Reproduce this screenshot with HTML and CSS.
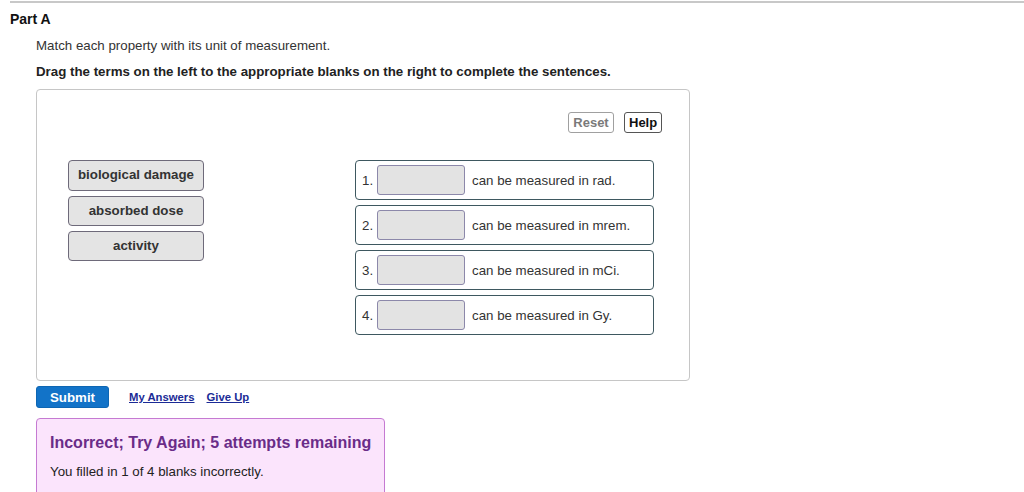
FILE: index.html
```html
<!DOCTYPE html>
<html>
<head>
<meta charset="utf-8">
<link rel="stylesheet" href="styles.css">
</head>
<body>
<div class="topline"></div>
<h2 class="part">Part A</h2>
<div class="content">
  <p class="prompt">Match each property with its unit of measurement.</p>
  <p class="instr">Drag the terms on the left to the appropriate blanks on the right to complete the sentences.</p>
  <div class="box">
    <div class="tools">
      <button class="btn reset">Reset</button>
      <button class="btn help">Help</button>
    </div>
    <div class="work">
      <div class="terms">
        <div class="term">biological damage</div>
        <div class="term">absorbed dose</div>
        <div class="term">activity</div>
      </div>
      <div class="sentences">
        <div class="sent"><span class="num">1.</span><span class="blank"></span><span class="stext">can be measured in rad.</span></div>
        <div class="sent"><span class="num">2.</span><span class="blank"></span><span class="stext">can be measured in mrem.</span></div>
        <div class="sent"><span class="num">3.</span><span class="blank"></span><span class="stext">can be measured in mCi.</span></div>
        <div class="sent"><span class="num">4.</span><span class="blank"></span><span class="stext">can be measured in Gy.</span></div>
      </div>
    </div>
  </div>
  <div class="actions">
    <button class="submit">Submit</button>
    <a class="link" href="#">My Answers</a>
    <a class="link" href="#">Give Up</a>
  </div>
  <div class="feedback">
    <div class="fb-title">Incorrect; Try Again; 5 attempts remaining</div>
    <div class="fb-body">You filled in 1 of 4 blanks incorrectly.</div>
  </div>
</div>
</body>
</html>
```
FILE: styles.css
```css
html, body {
  margin: 0;
  padding: 0;
  background: #fff;
  font-family: "Liberation Sans", Arial, sans-serif;
  color: #222;
}
.topline {
  margin: 1px 0 0 10px;
  height: 2px;
  background: #c8c8c8;
}
.part {
  margin: 8px 0 0 10px;
  font-size: 14px;
  line-height: 16px;
  font-weight: bold;
  color: #111;
}
.content {
  padding-left: 36px;
}
.prompt {
  margin: 11px 0 0 0;
  font-size: 13.3px;
  line-height: 15px;
  color: #333;
}
.instr {
  margin: 11px 0 0 0;
  font-size: 13.3px;
  line-height: 15px;
  font-weight: bold;
  color: #222;
}
.box {
  box-sizing: border-box;
  margin-top: 10px;
  width: 654px;
  height: 292px;
  border: 1px solid #c6c6c6;
  border-radius: 4px;
  padding: 22px 27px 0 31px;
}
.tools {
  display: flex;
  justify-content: flex-end;
  gap: 10px;
}
.btn {
  box-sizing: border-box;
  height: 21px;
  padding: 0 4px;
  background: #fff;
  border-radius: 3px;
  font-family: "Liberation Sans", Arial, sans-serif;
  font-size: 13px;
  font-weight: bold;
  cursor: pointer;
}
.reset {
  width: 46px;
  border: 1px solid #a0a0a0;
  color: #7a7a7a;
}
.help {
  width: 38px;
  border: 1px solid #555;
  color: #111;
}
.work {
  display: flex;
  margin-top: 27px;
}
.terms {
  display: flex;
  flex-direction: column;
  gap: 5px;
  width: 136px;
}
.term {
  box-sizing: border-box;
  height: 30px;
  background: #e4e4e4;
  border: 1px solid #6e6a7a;
  border-radius: 4px;
  text-align: center;
  font-size: 13.3px;
  font-weight: bold;
  line-height: 28px;
  color: #333;
}
.term:first-child {
  height: 31px;
}
.sentences {
  margin-left: 151px;
  display: flex;
  flex-direction: column;
  gap: 5px;
}
.sent {
  box-sizing: border-box;
  width: 299px;
  height: 40px;
  border: 1px solid #3e5860;
  border-radius: 4px;
  display: flex;
  align-items: center;
  padding-left: 6px;
  font-size: 13.3px;
  color: #333;
}
.num {
  width: 15px;
}
.blank {
  box-sizing: border-box;
  width: 88px;
  height: 30px;
  background: #e3e3e3;
  border: 1px solid #8c88aa;
  border-radius: 3px;
}
.stext {
  margin-left: 7px;
}
.actions {
  display: flex;
  align-items: center;
  margin-top: 5px;
  height: 22px;
}
.submit {
  width: 73px;
  height: 22px;
  background: #1273c8;
  border: 1px solid #0e66b3;
  border-radius: 3px;
  color: #fff;
  font-family: "Liberation Sans", Arial, sans-serif;
  font-size: 13.3px;
  font-weight: bold;
  padding: 0;
}
.link {
  margin-left: 12px;
  font-size: 11.3px;
  font-weight: bold;
  color: #1b2b96;
  text-decoration: underline;
}
.link:first-of-type {
  margin-left: 20px;
}
.feedback {
  box-sizing: border-box;
  margin-top: 10px;
  width: 349px;
  height: 90px;
  background: #fbe4fc;
  border: 1px solid #c57ad2;
  border-radius: 4px;
  padding: 14px 10px 0 13px;
}
.fb-title {
  font-size: 16px;
  line-height: 20px;
  font-weight: bold;
  color: #6a2c88;
  white-space: nowrap;
}
.fb-body {
  margin-top: 11px;
  font-size: 13.3px;
  line-height: 15px;
  color: #222;
}
```
